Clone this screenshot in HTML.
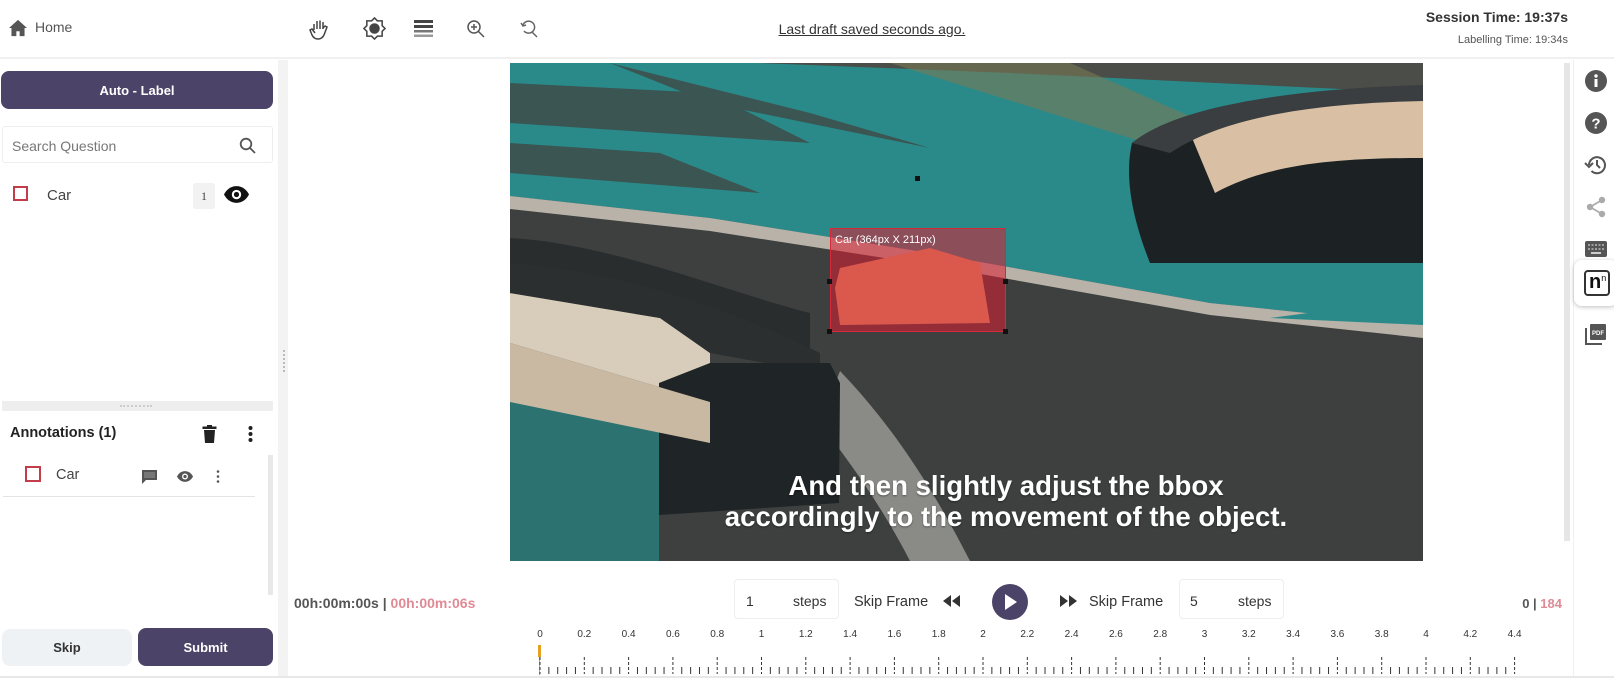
<!DOCTYPE html>
<html><head><meta charset="utf-8"><style>
*{box-sizing:border-box;margin:0;padding:0}
body{width:1614px;height:678px;overflow:hidden;background:#fff;font-family:"Liberation Sans",sans-serif;position:relative;color:#333}
.a{position:absolute}
.ic{position:absolute;fill:#555}
.btn{position:absolute;border-radius:8px;color:#fff;font-weight:bold;font-size:13px;display:flex;align-items:center;justify-content:center}
.rl{position:absolute;top:629px;font-size:10px;color:#333;transform:translateX(-50%)}
</style></head><body>
<div class="a" style="left:0;top:0;width:1614px;height:59px;background:#fff;border-bottom:2px solid #f0f0f0"></div>
<svg class="ic" style="left:8px;top:19px" width="20" height="18" viewBox="0 0 24 22"><path d="M12 1L1 11h3v10h6v-6h4v6h6V11h3z" fill="#555"/></svg>
<div class="a" style="left:35px;top:19px;font-size:14px;color:#555">Home</div>
<svg class="a" style="left:309px;top:18px" width="20" height="22" viewBox="0 0 20 22" fill="none" stroke="#444" stroke-width="1.5"><path d="M5 12V6M8 11V3M11 11V2.5M14 11V4M14 10l2-2 2 1-3 8c-1 2-3 4-6 4s-5-2-6-4l-2-5 2-1 3 4"/></svg>
<svg class="a" style="left:363px;top:17px" width="23" height="23" viewBox="0 0 24 24"><path d="M12 1l3 3h5v5l3 3-3 3v5h-5l-3 3-3-3H4v-5l-3-3 3-3V4h5z" fill="none" stroke="#444" stroke-width="1.6"/><circle cx="12" cy="12" r="5.5" fill="#444"/></svg>
<svg class="a" style="left:414px;top:20px" width="19" height="18" viewBox="0 0 19 18" fill="#444"><rect y="0" width="19" height="3"/><rect y="5" width="19" height="3"/><rect y="10" width="19" height="2.5" fill="#777"/><rect y="14.5" width="19" height="2.5" fill="#999"/></svg>
<svg class="a" style="left:466px;top:19px" width="20" height="20" viewBox="0 0 20 20" fill="none" stroke="#555" stroke-width="1.5"><circle cx="8" cy="8" r="6"/><path d="M12.5 12.5L18 18M8 5v6M5 8h6"/></svg>
<svg class="a" style="left:519px;top:19px" width="20" height="20" viewBox="0 0 20 20" fill="none" stroke="#666" stroke-width="1.5"><path d="M4 6a6 6 0 1 1 1 6"/><path d="M2 4l2 3 3-1"/><path d="M13 13L18 18"/></svg>
<div class="a" style="left:772px;top:21px;font-size:14px;color:#333;text-decoration:underline;width:200px;text-align:center">Last draft saved seconds ago.</div>
<div class="a" style="right:46px;top:9px;font-size:14px;font-weight:bold;color:#333">Session Time: 19:37s</div>
<div class="a" style="right:46px;top:34px;font-size:11px;color:#555">Labelling Time: 19:34s</div>

<div class="a" style="left:278px;top:60px;width:10px;height:618px;background:#f3f3f3"></div>
<div class="a" style="left:283px;top:350px;width:2px;height:22px;border-left:2px dotted #bbb"></div>
<div class="btn" style="left:1px;top:71px;width:272px;height:38px;background:#4c4468">Auto - Label</div>
<div class="a" style="left:2px;top:126px;width:271px;height:37px;border:1px solid #eee;border-radius:3px"></div>
<div class="a" style="left:12px;top:138px;font-size:14px;color:#777">Search Question</div>
<svg class="a" style="left:239px;top:137px" width="17" height="17" viewBox="0 0 17 17" fill="none" stroke="#555" stroke-width="1.8"><circle cx="7" cy="7" r="5.3"/><path d="M11 11l5 5"/></svg>
<div class="a" style="left:13px;top:186px;width:15px;height:15px;border:2px solid #c33c4a"></div>
<div class="a" style="left:47px;top:187px;font-size:15px;color:#444">Car</div>
<div class="a" style="left:193px;top:183px;width:22px;height:26px;background:#f2f2f2;border-radius:3px;font-size:12px;font-family:'Liberation Serif',serif;text-align:center;line-height:26px;color:#444">1</div>
<svg class="a" style="left:224px;top:186px" width="25" height="17" viewBox="0 0 24 16"><path d="M12 0C6 0 2 4 0 8c2 4 6 8 12 8s10-4 12-8c-2-4-6-8-12-8z" fill="#111"/><circle cx="12" cy="8" r="4.5" fill="#fff"/><circle cx="12" cy="8" r="2.5" fill="#111"/></svg>
<div class="a" style="left:2px;top:401px;width:271px;height:10px;background:#eee"></div>
<div class="a" style="left:120px;top:405px;width:32px;height:3px;border-top:2px dotted #ccc"></div>
<div class="a" style="left:10px;top:425px;font-size:14.5px;font-weight:bold;color:#222">Annotations (1)</div>
<svg class="a" style="left:202px;top:425px" width="15" height="18" viewBox="0 0 14 18" fill="#222"><rect x="0" y="1.5" width="14" height="2.5"/><rect x="4.5" y="0" width="5" height="2"/><path d="M1.5 5h11l-1 13h-9z"/></svg>
<svg class="a" style="left:248px;top:426px" width="5" height="16" viewBox="0 0 5 16" fill="#222"><circle cx="2.5" cy="2" r="2"/><circle cx="2.5" cy="8" r="2"/><circle cx="2.5" cy="14" r="2"/></svg>
<div class="a" style="left:268px;top:455px;width:5px;height:140px;background:#e8e8e8"></div>
<div class="a" style="left:25px;top:466px;width:16px;height:16px;border:2px solid #c33c4a"></div>
<div class="a" style="left:56px;top:467px;font-size:14.5px;color:#444">Car</div>
<svg class="a" style="left:142px;top:470px" width="15" height="14" viewBox="0 0 15 14"><path d="M0 0h15v10H4l-4 4z" fill="#555"/><rect x="2" y="2" width="11" height="6" fill="#777"/></svg>
<svg class="a" style="left:177px;top:471px" width="16" height="11" viewBox="0 0 24 16"><path d="M12 0C6 0 2 4 0 8c2 4 6 8 12 8s10-4 12-8c-2-4-6-8-12-8z" fill="#555"/><circle cx="12" cy="8" r="4.5" fill="#fff"/><circle cx="12" cy="8" r="2.5" fill="#555"/></svg>
<svg class="a" style="left:216px;top:470px" width="4" height="13" viewBox="0 0 4 13" fill="#555"><circle cx="2" cy="1.5" r="1.3"/><circle cx="2" cy="6.5" r="1.3"/><circle cx="2" cy="11.5" r="1.3"/></svg>
<div class="a" style="left:3px;top:496px;width:252px;height:1px;background:#e4e4e4"></div>
<div class="btn" style="left:2px;top:629px;width:130px;height:37px;background:#eff2f5;color:#333">Skip</div>
<div class="btn" style="left:138px;top:628px;width:135px;height:38px;background:#4c4468">Submit</div>

<svg class="a" style="left:510px;top:63px" width="913" height="498" viewBox="0 0 913 498">
<rect width="913" height="498" fill="#3d403f"/>
<path d="M0 0H913V262L700 240 420 190 200 155 0 133z" fill="#2a8a8a"/>
<path d="M0 0H913V30L500 10 250 0z" fill="#4a4d48"/>
<path d="M380 0H560L740 80 700 100z" fill="#7a7a55" opacity=".6"/>
<path d="M0 20L200 30 300 80 0 60z" fill="#3b5552"/>
<path d="M0 80L150 90 250 130 0 110z" fill="#3b5552"/>
<path d="M100 0L300 50 420 85 200 40z" fill="#3b5552"/>
<path d="M0 133L200 155 420 190 700 240 913 262V275L700 252 420 202 200 168 0 146z" fill="#b8b2a8"/>
<path d="M760 255L913 235V262z" fill="#2a8a8a"/>
<path d="M0 339H149V498H0z" fill="#2b7270"/>
<path d="M330 308C380 360 420 420 460 498H400C370 440 340 400 310 360z" fill="#8a8a86"/>
<path d="M622 80C680 40 800 30 913 28V200L640 200C620 150 615 110 622 80z" fill="#1c2224"/>
<path d="M680 70C740 40 830 30 913 35V95C830 95 760 100 705 130z" fill="#d9bfa3"/>
<path d="M622 80C670 40 800 25 913 22V38C820 40 720 50 660 90z" fill="#3a3e40"/>
<path d="M0 175C100 180 220 230 300 250V300L0 235z" fill="#2a2d2e"/>
<path d="M0 230L150 255 200 290 200 339L0 280z" fill="#d8cdbb"/>
<path d="M0 200C120 210 230 250 310 290V310L200 290 150 255 0 230z" fill="#2c2f30"/>
<path d="M149 320L200 300 320 300 330 320 329 440 149 452z" fill="#1f2426"/>
<path d="M0 280L200 339 200 380 0 339z" fill="#c9b9a2"/>
<path d="M330 205L420 185 470 200 480 260 330 262 325 225z" fill="#d9a070"/>
</svg>
<div class="a" style="left:830px;top:228px;width:176px;height:104px;background:rgba(220,30,50,.55);border:1px solid #d42a3a"></div>
<div class="a" style="left:835px;top:234px;font-size:11px;color:#fff">Car (364px X 211px)</div>
<div class="a" style="left:827px;top:279px;width:5px;height:5px;background:#111"></div>
<div class="a" style="left:1003px;top:279px;width:5px;height:5px;background:#111"></div>
<div class="a" style="left:827px;top:329px;width:5px;height:5px;background:#111"></div>
<div class="a" style="left:1003px;top:329px;width:5px;height:5px;background:#111"></div>
<div class="a" style="left:915px;top:176px;width:5px;height:5px;background:#111"></div>
<div class="a" style="left:656px;top:470px;width:700px;text-align:center;color:#fff;font-weight:bold;font-size:28px;line-height:31px;transform:scaleX(.985);text-shadow:0 1px 2px rgba(0,0,0,.4)">And then slightly adjust the bbox<br>accordingly to the movement of the object.</div>

<div class="a" style="left:1564px;top:63px;width:6px;height:478px;background:#e6e6e6"></div>
<div class="a" style="left:1573px;top:60px;width:41px;height:618px;background:#fff;border-left:1px solid #f0f0f0"></div>
<svg class="ic" style="left:1585px;top:70px" width="22" height="22" viewBox="0 0 22 22"><circle cx="11" cy="11" r="11" fill="#555"/><rect x="9.5" y="9" width="3" height="8" fill="#fff"/><circle cx="11" cy="6" r="1.7" fill="#fff"/></svg>
<svg class="ic" style="left:1585px;top:112px" width="22" height="22" viewBox="0 0 22 22"><circle cx="11" cy="11" r="11" fill="#555"/><text x="11" y="16.5" font-size="15" font-weight="bold" fill="#fff" text-anchor="middle" font-family="Liberation Sans">?</text></svg>
<svg class="a" style="left:1584px;top:154px" width="24" height="22" viewBox="0 0 24 22" fill="none" stroke="#555" stroke-width="2"><path d="M5 11a8 8 0 1 1 2.5 6"/><path d="M1 9l4 4 4-4"/><path d="M13 6v5l3 3"/></svg>
<svg class="a" style="left:1586px;top:196px" width="20" height="22" viewBox="0 0 20 22" fill="#aaa"><circle cx="16" cy="4" r="3.2"/><circle cx="4" cy="11" r="3.2"/><circle cx="16" cy="18" r="3.2"/><path d="M16 4L4 11 16 18" stroke="#aaa" stroke-width="1.6" fill="none"/></svg>
<svg class="a" style="left:1585px;top:241px" width="22" height="16" viewBox="0 0 22 16"><rect width="22" height="16" rx="2" fill="#555"/><path d="M3 4h16M3 8h16" stroke="#ccc" stroke-width="1.2" stroke-dasharray="2 1.5"/><rect x="6" y="11" width="10" height="2" fill="#ccc"/></svg>
<div class="a" style="left:1574px;top:260px;width:44px;height:46px;background:#fff;border-radius:8px;box-shadow:0 1px 5px rgba(0,0,0,.25)"></div>
<div class="a" style="left:1584px;top:270px;width:26px;height:26px;border:2px solid #333;border-radius:4px;font-weight:bold;font-size:20px;color:#111;line-height:21px;padding-left:3px">n<span style="font-size:9px;font-weight:normal;vertical-align:top;line-height:12px">n</span></div>
<svg class="a" style="left:1585px;top:323px" width="22" height="22" viewBox="0 0 22 22"><path d="M1 5v16h16" fill="none" stroke="#555" stroke-width="2"/><rect x="5" y="1" width="16" height="16" rx="1" fill="#555"/><text x="13" y="12" font-size="6" font-weight="bold" fill="#fff" text-anchor="middle" font-family="Liberation Sans">PDF</text></svg>

<div class="a" style="left:294px;top:595px;font-size:14px;font-weight:bold;color:#555">00h:00m:00s | <span style="color:#e08a95">00h:00m:06s</span></div>
<div class="a" style="left:734px;top:579px;width:105px;height:40px;border:1px solid #eee;border-radius:4px"></div>
<div class="a" style="left:746px;top:593px;font-size:14px;color:#333">1</div>
<div class="a" style="left:793px;top:593px;font-size:14px;color:#333">steps</div>
<div class="a" style="left:854px;top:594px;font-size:14.5px;color:#333">Skip Frame</div>
<svg class="a" style="left:941px;top:595px" width="20" height="12" viewBox="0 0 20 12" fill="#333"><path d="M10 0v12L2 6zM19 0v12L11 6z"/></svg>
<div class="a" style="left:992px;top:584px;width:36px;height:36px;border-radius:50%;background:#4c4468"></div>
<svg class="a" style="left:1005px;top:594px" width="12" height="16" viewBox="0 0 12 16"><path d="M0 0l12 8-12 8z" fill="#fff"/></svg>
<svg class="a" style="left:1059px;top:595px" width="20" height="12" viewBox="0 0 20 12" fill="#333"><path d="M1 0v12l8-6zM10 0v12l8-6z"/></svg>
<div class="a" style="left:1089px;top:594px;font-size:14.5px;color:#333">Skip Frame</div>
<div class="a" style="left:1179px;top:579px;width:105px;height:40px;border:1px solid #eee;border-radius:4px"></div>
<div class="a" style="left:1190px;top:593px;font-size:14px;color:#333">5</div>
<div class="a" style="left:1238px;top:593px;font-size:14px;color:#333">steps</div>
<div class="a" style="right:52px;top:596px;font-size:13px;font-weight:bold;color:#555">0 | <span style="color:#e08a95">184</span></div>
<svg class="a" style="left:530px;top:640px" width="1050" height="38" viewBox="0 0 1050 38">
<rect x="8" y="5" width="3" height="12" fill="#e5a020"/><rect x="9" y="5" width="1" height="30" fill="#e5a020"/>
<g id="tk" stroke="#333" stroke-width="1"></g>
</svg>
<div id="labels"></div>
<div class="a" style="left:0;top:676px;width:1614px;height:2px;background:#e8e8e8"></div>
<script>
var L=document.getElementById('labels'),h='';
for(var i=0;i<=22;i++){var v=+(i*0.2).toFixed(1);h+='<div class="rl" style="left:'+(540+i*44.3)+'px">'+v+'</div>';}
L.innerHTML=h;
var g=document.getElementById('tk'),s='';
for(var j=0;j<=110;j++){var x=10+j*8.86;if(j%5==0){s+='<line x1="'+x+'" y1="17" x2="'+x+'" y2="34" stroke-dasharray="3 2"/>';}else{s+='<line x1="'+x+'" y1="27" x2="'+x+'" y2="34"/>';}}
g.innerHTML=s;
</script>
</body></html>
